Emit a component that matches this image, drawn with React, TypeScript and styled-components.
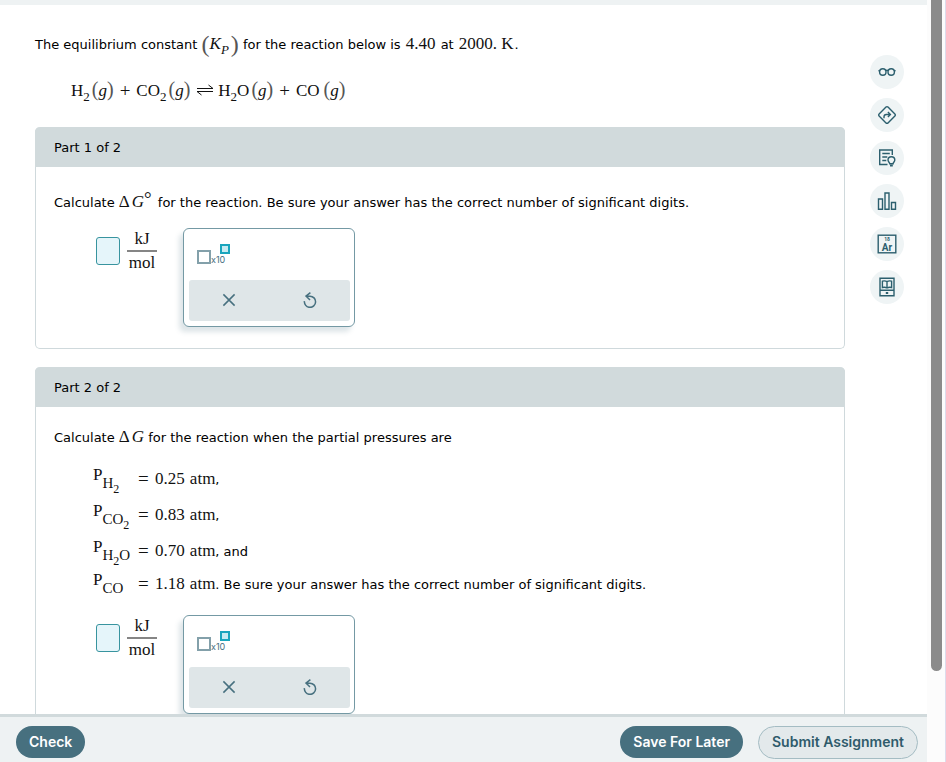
import React from "react";
import styled, { createGlobalStyle } from "styled-components";

const GlobalStyle = createGlobalStyle`
  * { box-sizing: border-box; }
  body { margin: 0; background: #fff; }
`;

const Page = styled.div`
  display: flex;
  height: 100vh;
  overflow: hidden;
  color: #000;
  font: 13px/20px Verdana, "DejaVu Sans", sans-serif;
`;

const Column = styled.div`
  display: flex;
  flex: 1;
  flex-direction: column;
  min-width: 0;
  border-top: 5px solid #eef2f3;
`;

const Workspace = styled.div`
  display: flex;
  flex: 1;
  min-height: 0;
  overflow: hidden;
`;

const Content = styled.main`
  flex: 1;
  min-width: 0;
  padding: 25px 0 0 35px;
`;

const Intro = styled.p`
  height: 30px;
  margin: 0 0 16px;
  line-height: 30px;
  white-space: nowrap;
`;

const Equation = styled.p`
  height: 30px;
  margin: 0 0 21px;
  padding-left: 36px;
  font: 17px/30px "Times New Roman", "Liberation Serif", serif;
  color: #111;
  white-space: nowrap;
`;

const Math = styled.span<{ $tight?: boolean }>`
  margin: 0 ${(p) => (p.$tight ? 0 : 1)}px;
  font-family: "Times New Roman", "Liberation Serif", serif;
  font-size: 17px;
  line-height: 1;
  color: #111;
`;

const Paren = styled.span<{ $tall?: boolean }>`
  font-family: "Times New Roman", "Liberation Serif", serif;
  font-size: ${(p) => (p.$tall ? 24 : 20)}px;
  line-height: 1;
  vertical-align: ${(p) => (p.$tall ? "-3px" : "0")};
  color: #555;
`;

const Sub = styled.span<{ $small?: boolean }>`
  font-size: ${(p) => (p.$small ? 12 : 13)}px;
  line-height: 0;
  vertical-align: -5px;
`;

const Degree = styled.span`
  margin-right: 2px;
  font-size: 19px;
  line-height: 0;
  vertical-align: 2px;
`;

const Gap = styled.span`
  display: inline-block;
  width: 2px;
`;

const Operator = styled.span<{ $space: number }>`
  padding: 0 ${(p) => p.$space}px;
  font-size: 19px;
  line-height: 0;
  vertical-align: -1px;
`;

const Arrows = styled.svg`
  width: 18px;
  height: 12px;
  margin: 0 4px 0 6px;
`;

const Panel = styled.section`
  margin-bottom: 18px;
  border: 1px solid #cfd9dc;
  border-top: 0;
  border-radius: 5px;
`;

const PanelTitle = styled.h2`
  margin: 0 -1px;
  padding: 11px 19px 9px;
  border-radius: 5px 5px 0 0;
  background: #d1dadc;
  font: inherit;
`;

const PanelBody = styled.div<{ $top: number }>`
  padding: ${(p) => p.$top}px 18px 21px;
`;

const Prompt = styled.p`
  height: 20px;
  margin: 0 0 14px;
  white-space: nowrap;
`;

const AnswerRow = styled.div<{ $space: number }>`
  display: flex;
  align-items: flex-start;
  margin: ${(p) => p.$space}px 0 0 42px;
`;

const AnswerInput = styled.input`
  width: 24px;
  height: 28px;
  margin: 9px 7px 0 0;
  padding: 0;
  border: 1px solid #38949f;
  border-radius: 3px;
  background: #e5f5fa;
  text-align: center;
  font: 16px "Liberation Serif", serif;
`;

const Fraction = styled.div`
  display: flex;
  flex-direction: column;
  align-items: center;
  width: 30px;
  margin-right: 26px;
  font: 17px/22px "Times New Roman", "Liberation Serif", serif;
  color: #111;
`;

const Denominator = styled.span`
  width: 100%;
  border-top: 2px solid #858585;
  text-align: center;
`;

const Palette = styled.div`
  width: 172px;
  padding: 0 4px 5px 5px;
  border: 1px solid #7499a4;
  border-radius: 6px;
  background: #fff;
  box-shadow: -4px 5px 5px rgba(70, 112, 127, 0.18);
`;

const PaletteTop = styled.div`
  height: 51px;
  padding: 14px 0 0 8px;
`;

const SciButton = styled.button`
  display: flex;
  align-items: flex-end;
  height: 22px;
  padding: 0;
  border: 0;
  background: none;
  color: #47707f;
  font: 9px/10px Inter, sans-serif;
`;

const Mantissa = styled.span`
  width: 14px;
  height: 14px;
  margin-bottom: 1px;
  border: 2px solid #83a0aa;
`;

const Exponent = styled.span`
  align-self: flex-start;
  width: 10px;
  height: 10px;
  margin: 1px 0 0 -5px;
  border: 2px solid #1aa5bd;
  background: #c8ebf2;
`;

const PaletteActions = styled.div`
  display: flex;
  height: 41px;
  padding-bottom: 1px;
  border-radius: 3px;
  background: #dfe6e8;
`;

const IconButton = styled.button`
  display: flex;
  flex: 1;
  align-items: center;
  justify-content: center;
  padding: 0;
  border: 0;
  background: none;
  color: #47707f;
`;

const PressureRow = styled.div<{ $short?: boolean }>`
  display: flex;
  align-items: center;
  height: ${(p) => (p.$short ? 30 : 36)}px;
  padding-left: 38px;
  white-space: nowrap;
`;

const Pressure = styled(Math)`
  width: 43px;
  height: 28px;
  line-height: 18px;
`;

const Species = styled.span`
  font-size: 15px;
  vertical-align: -8px;
  line-height: 1;
`;

const Rail = styled.nav`
  display: flex;
  flex-direction: column;
  gap: 9px;
  width: 82px;
  padding: 50px 0 0 25px;
`;

const RailButton = styled.button`
  display: flex;
  align-items: center;
  justify-content: center;
  width: 34px;
  height: 34px;
  padding: 0;
  border: 0;
  border-radius: 50%;
  background: #eff4f5;
  color: #2c5f6e;
`;

const Footer = styled.footer`
  display: flex;
  align-items: center;
  gap: 15px;
  height: 48px;
  padding: 5px 9px 0 16px;
  border-top: 3px solid #d1dadc;
  background: #eef2f3;
`;

const Spacer = styled.div`
  flex: 1;
`;

const Pill = styled.button<{ $outline?: boolean }>`
  height: ${(p) => (p.$outline ? 33 : 32)}px;
  padding: 0 13px;
  border: ${(p) => (p.$outline ? "1px solid #a4bcc3" : "0")};
  border-radius: 17px;
  background: ${(p) => (p.$outline ? "#e3e9eb" : "#47707f")};
  color: ${(p) => (p.$outline ? "#2f5b6b" : "#fff")};
  font: 600 14px/20px Inter, sans-serif;
  white-space: nowrap;
`;

const ScrollTrack = styled.div`
  width: 19px;
  padding: 0 3px 0 4px;
  border-right: 1px solid #dcdcec;
  background: #fcfcfc;
`;

const ScrollThumb = styled.div`
  height: 88%;
  border-radius: 0 0 6px 6px;
  background: #8b8b8b;
`;

const Icon = ({ size = 20, width = 1.4, children }: { size?: number; width?: number; children: React.ReactNode }) => (
  <svg width={size} height={size} viewBox="0 0 20 20" fill="none" stroke="currentColor" strokeWidth={width} aria-hidden="true">
    {children}
  </svg>
);

const railTools = [
  {
    label: "Reading view",
    icon: (
      <>
        <circle cx="5.8" cy="10" r="3.2" />
        <circle cx="14.2" cy="10" r="3.2" />
        <path d="M1.5 9 3 8.3M18.5 9 17 8.3M8.7 8.7q1.3-1 2.6 0" />
      </>
    ),
  },
  {
    label: "Directions",
    icon: (
      <>
        <path d="M9 2.1 2.1 9a1.4 1.4 0 0 0 0 2L9 17.9a1.4 1.4 0 0 0 2 0l6.9-6.9a1.4 1.4 0 0 0 0-2L11 2.1a1.4 1.4 0 0 0-2 0Z" />
        <path d="M7 13.2v-1.4q0-2.3 2.3-2.3h4M10.9 7l2.5 2.5-2.5 2.5" />
      </>
    ),
  },
  {
    label: "Hints",
    icon: (
      <>
        <path d="M10.5 16.5H2.7V2h12.6v5M5.3 5.5h7.5M5.3 9h5M5.3 12.5h4" />
        <path d="M12.7 15.7c0-1.2-1.7-1.8-1.7-3.6a3.4 3.4 0 0 1 6.8 0c0 1.8-1.7 2.4-1.7 3.6Z" />
        <path d="M13 17.5h2.8" strokeWidth="2" />
      </>
    ),
  },
  {
    label: "Data",
    icon: <path d="M1.5 8h4v10.3h-4zM8 2h4v16.3H8zM14.5 11.5h4v6.8h-4z" />,
  },
  {
    label: "Periodic table",
    icon: (
      <>
        <rect x="1.2" y="1.2" width="17.6" height="17.6" />
        <text x="10" y="6.8" textAnchor="middle" fontFamily="Roboto" fontSize="5" fontWeight="700" fill="currentColor" stroke="none">18</text>
        <text x="10" y="16.8" textAnchor="middle" fontFamily="Roboto" fontSize="10" fontWeight="700" fill="currentColor" stroke="none">Ar</text>
      </>
    ),
  },
  {
    label: "Reference book",
    icon: (
      <>
        <path d="M3 1.2h14v17.6H3zM3 13.3h14" />
        <path d="M10 4.7C8.5 3.7 7 3.7 5.4 4.2v6.3c1.6-.4 3.1-.4 4.6.5 1.5-.9 3-.9 4.6-.5V4.2C13 3.7 11.5 3.7 10 4.7Zm0 0V11" />
        <path d="M8.8 16h2.4" strokeWidth="2" />
      </>
    ),
  },
];

const Gas = () => (
  <>
    <Gap />
    <Paren>(</Paren>
    <i>g</i>
    <Paren>)</Paren>
  </>
);

const Answer = ({ label, space }: { label: string; space: number }) => (
  <AnswerRow $space={space}>
    <AnswerInput aria-label={label} />
    <Fraction>
      <span>kJ</span>
      <Denominator>mol</Denominator>
    </Fraction>
    <Palette>
      <PaletteTop>
        <SciButton aria-label="Scientific notation">
          <Mantissa />
          x10
          <Exponent />
        </SciButton>
      </PaletteTop>
      <PaletteActions>
        <IconButton aria-label="Clear">
          <Icon size={16} width={1.9}>
            <path d="M3 3 17 17M17 3 3 17" />
          </Icon>
        </IconButton>
        <IconButton aria-label="Undo">
          <Icon size={16} width={1.9}>
            <path d="M3 11.5a7 7 0 1 0 7-6.300H5M10.500.8 5 5.200l5 4.800" />
          </Icon>
        </IconButton>
      </PaletteActions>
    </Palette>
  </AnswerRow>
);

const pressures = [
  { species: <>H<Sub $small>2</Sub></>, value: "0.25", tail: "," },
  { species: <>CO<Sub $small>2</Sub></>, value: "0.83", tail: "," },
  { species: <>H<Sub $small>2</Sub>O</>, value: "0.70", tail: ", and" },
  { species: <>CO</>, value: "1.18", tail: ". Be sure your answer has the correct number of significant digits.", short: true },
];

export default function App() {
  return (
    <>
      <GlobalStyle />
      <Page>
        <Column>
          <Workspace>
            <Content>
              <Intro>
                The equilibrium constant <Paren $tall>(</Paren>
                <Math $tight><i>K</i><Sub><i>P</i></Sub></Math>
                <Gap />
                <Paren $tall>)</Paren> for the reaction below is <Math>4.40</Math> at <Math>2000. K</Math>.
              </Intro>
              <Equation>
                H<Sub>2</Sub><Gas /><Operator $space={6}>+</Operator>CO<Sub>2</Sub><Gas />
                <Arrows viewBox="0 0 18 12" fill="none" stroke="#111" role="img" aria-label="in equilibrium with">
                  <path d="M1 4.5h16L12.5 1M17 7.5H1L5.5 11" />
                </Arrows>
                H<Sub>2</Sub>O<Gas /><Operator $space={6}>+</Operator>CO<Gap /><Gas />
              </Equation>

              <Panel>
                <PanelTitle>Part 1 of 2</PanelTitle>
                <PanelBody $top={26}>
                  <Prompt>
                    Calculate <Math $tight>Δ<Gap /><i>G</i><Degree>°</Degree></Math> for the reaction. Be sure your answer has the correct number of significant digits.
                  </Prompt>
                  <Answer label="Part 1 answer in kJ/mol" space={15} />
                </PanelBody>
              </Panel>

              <Panel>
                <PanelTitle>Part 2 of 2</PanelTitle>
                <PanelBody $top={21}>
                  <Prompt>
                    Calculate <Math $tight>Δ<Gap /><i>G</i></Math> for the reaction when the partial pressures are
                  </Prompt>
                  {pressures.map((p) => (
                    <PressureRow key={p.value} $short={p.short}>
                      <Pressure>P<Species>{p.species}</Species></Pressure>
                      <span>
                        <Math><Operator $space={0}>=</Operator><Gap /> {p.value}</Math> <Math $tight>atm</Math>{p.tail}
                      </span>
                    </PressureRow>
                  ))}
                  <Answer label="Part 2 answer in kJ/mol" space={15} />
                </PanelBody>
              </Panel>
            </Content>
            <Rail aria-label="Tools">
              {railTools.map((tool) => (
                <RailButton key={tool.label} aria-label={tool.label}>
                  <Icon>{tool.icon}</Icon>
                </RailButton>
              ))}
            </Rail>
          </Workspace>
          <Footer>
            <Pill>Check</Pill>
            <Spacer />
            <Pill>Save For Later</Pill>
            <Pill $outline>Submit Assignment</Pill>
          </Footer>
        </Column>
        <ScrollTrack>
          <ScrollThumb />
        </ScrollTrack>
      </Page>
    </>
  );
}
